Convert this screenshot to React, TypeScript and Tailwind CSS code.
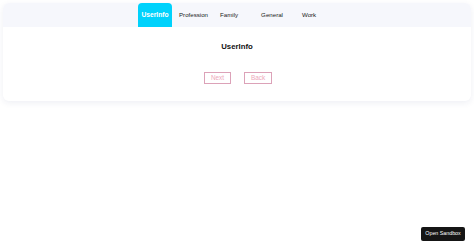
import React from "react";

// Wizard-style tab card with a "Open Sandbox" badge in the corner
const tabs = [
  { label: "UserInfo", cls: "w-[34px]" },
  { label: "Profession", cls: "ml-[7px]" },
  { label: "Family", cls: "ml-[12px]" },
  { label: "General", cls: "ml-[23px]" },
  { label: "Work", cls: "ml-[19px]" },
];

export default function App() {
  return (
    <div
      className="relative h-[248px] w-[474px] bg-white"
      style={{ fontFamily: '"Liberation Sans", Arial, sans-serif' }}
    >
      <div className="px-[3px] pt-[3px]">
        {/* Card */}
        <div className="h-[98px] overflow-hidden rounded-[6px] bg-white shadow-[0_2px_6px_rgba(40,50,110,0.08)]">
          {/* Tab bar */}
          <div className="flex h-[24px] items-stretch bg-[#f6f7fc] pl-[135px]">
            {tabs.map((t, i) =>
              i === 0 ? (
                <div
                  key={t.label}
                  className={`flex items-center justify-center rounded-t-[4px] bg-[#00d2fc] text-[6.7px] font-bold text-white ${t.cls}`}
                >
                  {t.label}
                </div>
              ) : (
                <div
                  key={t.label}
                  className={`flex items-center text-[6.15px] text-[#222] ${t.cls}`}
                >
                  {t.label}
                </div>
              )
            )}
          </div>

          {/* Body */}
          <div className="flex flex-col items-center">
            <div className="mt-[14px] text-[7.8px] font-bold text-[#111]">
              UserInfo
            </div>
            <div className="mt-[19px] flex gap-[13px] pl-[2px]">
              <button className="flex h-[12px] w-[27px] items-center justify-center border border-[#dca2b8] text-[6.4px] text-[#eda7bb]">
                Next
              </button>
              <button className="flex h-[12px] w-[28px] items-center justify-center border border-[#dca2b8] text-[6.4px] text-[#eda7bb]">
                Back
              </button>
            </div>
          </div>
        </div>
      </div>

      {/* Sandbox badge */}
      <div className="absolute left-[421px] top-[227px] flex h-[14px] w-[44px] items-center justify-center rounded-[2px] bg-[#151515] text-[5.3px] text-white">
        Open Sandbox
      </div>
    </div>
  );
}
